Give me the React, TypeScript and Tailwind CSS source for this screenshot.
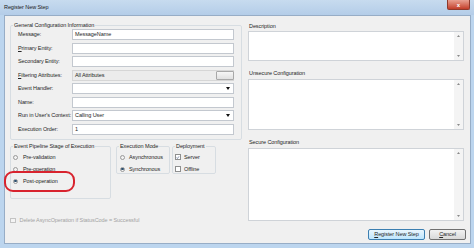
import React from "react";

const font = { fontFamily: '"Liberation Sans", Arial, sans-serif' };

function Field({ children, gray }: { children?: React.ReactNode; gray?: boolean }) {
  return (
    <div
      className={
        "w-[162px] h-[11px] border flex items-center pl-[2px] " +
        (gray ? "bg-[#ececec] border-[#d6d6d6]" : "bg-white border-[#c3c8cf]")
      }
    >
      {children}
    </div>
  );
}

function Arrow() {
  return (
    <svg width="4" height="3" viewBox="0 0 4 3" className="ml-auto mr-[3px]">
      <path d="M0 0h4L2 3z" fill="#111" />
    </svg>
  );
}

function Row({ label, children }: { label: React.ReactNode; children: React.ReactNode }) {
  return (
    <div className="flex items-center h-[11px]">
      <div className="w-[59px] pl-[5px] whitespace-nowrap">{label}</div>
      {children}
    </div>
  );
}

function Radio({ checked }: { checked?: boolean }) {
  return (
    <div className="w-[5px] h-[5px] rounded-full border border-[#9a9a9a] bg-gradient-to-br from-[#e6e6e6] to-[#ffffff] flex items-center justify-center">
      {checked && <div className="w-[2.5px] h-[2.5px] rounded-full bg-[#2e4f6e]" />}
    </div>
  );
}

function Check({ checked, disabled }: { checked?: boolean; disabled?: boolean }) {
  return (
    <div
      className={
        "w-[5.5px] h-[5.5px] border flex items-center justify-center " +
        (disabled ? "border-[#c4c4c4] bg-[#f4f4f4]" : "border-[#8e8f8f] bg-white")
      }
    >
      {checked && (
        <svg width="5" height="5" viewBox="0 0 5 5">
          <path d="M0.8 2.6 L2 3.9 L4.3 0.9" stroke="#3b4f7a" strokeWidth="0.9" fill="none" />
        </svg>
      )}
    </div>
  );
}

function TextArea({ h }: { h: string }) {
  return (
    <div className={"w-[216px] flex border border-[#cfd3d8] " + h}>
      <div className="flex-1 bg-white" />
      <div className="w-[9px] bg-[#f4f4f4] flex flex-col items-center justify-between py-[3px]">
        <svg width="3" height="2" viewBox="0 0 3 2">
          <path d="M0 2h3L1.5 0z" fill="#8a8a8a" />
        </svg>
        <svg width="3" height="2" viewBox="0 0 3 2">
          <path d="M0 0h3L1.5 2z" fill="#8a8a8a" />
        </svg>
      </div>
    </div>
  );
}

export default function App() {
  return (
    <div
      className="w-[474px] h-[248px] bg-[#bcd5ee] flex flex-col text-[5.5px] leading-[7px] tracking-[-0.08px] text-[#262626] overflow-hidden"
      style={font}
    >
      {/* title bar */}
      <div className="h-[15px] flex items-start bg-gradient-to-b from-[#c7dbef] to-[#b4cde8]">
        <div className="pl-[4px] pt-[3.5px] text-[#1a1a1a]">Register New Step</div>
        <div className="ml-auto mr-[4px] w-[23px] h-[10px] rounded-b-[2px] border border-[#8e3a2c] border-t-0 bg-gradient-to-b from-[#e8a091] to-[#c23c28] flex items-center justify-center text-white text-[6px] font-bold leading-none">
          x
        </div>
      </div>

      {/* client area */}
      <div className="ml-[4px] w-[467px] h-[229px] border border-[#97adc6] bg-[#f0f0f0] flex">
        {/* left column */}
        <div className="w-[238px] flex flex-col">
          <fieldset className="ml-[5px] mt-[6px] w-[232px] h-[118px] border border-[#d7dde2] rounded-[2px] px-[2px]">
            <legend className="px-[1px] leading-[7px]">General Configuration Information</legend>
            <div className="flex flex-col gap-[2.5px]">
              <Row label="Message:">
                <Field>MessageName</Field>
              </Row>
              <Row label={<><u>P</u>rimary Entity:</>}>
                <Field />
              </Row>
              <Row label="Secondary Entity:">
                <Field />
              </Row>
              <Row label={<><u>F</u>iltering Attributes:</>}>
                <Field gray>
                  All Attributes
                  <div className="ml-auto mr-[-1px] w-[18px] h-[9px] border border-[#a8a8a8] rounded-[1px] bg-gradient-to-b from-[#f6f6f6] to-[#e0e0e0]" />
                </Field>
              </Row>
              <Row label="Event Handler:">
                <Field>
                  <Arrow />
                </Field>
              </Row>
              <Row label="Name:">
                <Field />
              </Row>
              <Row label="Run in User's Context:">
                <Field>
                  Calling User
                  <Arrow />
                </Field>
              </Row>
              <Row label="Execution Order:">
                <Field>1</Field>
              </Row>
            </div>
          </fieldset>

          <div className="flex mt-[3px]">
            <fieldset className="relative ml-[5px] w-[101px] h-[56px] border border-[#d7dde2] rounded-[2px] px-[2px]">
              <legend className="px-[1px] leading-[7px]">Event Pipeline Stage of Execution</legend>
              <div className="flex flex-col mt-[1px]">
                <div className="flex items-center h-[12px] gap-[5px]">
                  <Radio />
                  <span>Pre-validation</span>
                </div>
                <div className="flex items-center h-[12px] gap-[5px]">
                  <Radio />
                  <span>Pre-operation</span>
                </div>
                <div className="flex items-center h-[12px] gap-[5px]">
                  <Radio checked />
                  <span>Post-operation</span>
                </div>
              </div>
              {/* red annotation */}
              <div className="absolute left-[-7px] top-[21px] w-[71px] h-[21px] border-2 border-[#d8232e] rounded-[9px]" />
            </fieldset>

            <fieldset className="ml-[5px] w-[54px] h-[31px] border border-[#d7dde2] rounded-[2px] px-[2px]">
              <legend className="px-[1px] leading-[7px]">Execution Mode</legend>
              <div className="flex flex-col mt-[1px] pl-[1px]">
                <div className="flex items-center h-[12px] gap-[4px]">
                  <Radio />
                  <span>Asynchronous</span>
                </div>
                <div className="flex items-center h-[12px] gap-[4px]">
                  <Radio checked />
                  <span>Synchronous</span>
                </div>
              </div>
            </fieldset>

            <fieldset className="ml-[2px] w-[44px] h-[31px] border border-[#d7dde2] rounded-[2px] px-[2px]">
              <legend className="px-[1px] leading-[7px]">Deployment</legend>
              <div className="flex flex-col mt-[1px]">
                <div className="flex items-center h-[12px] gap-[3.5px]">
                  <Check checked />
                  <span>Server</span>
                </div>
                <div className="flex items-center h-[12px] gap-[3.5px]">
                  <Check />
                  <span>Offline</span>
                </div>
              </div>
            </fieldset>
          </div>

          <div className="flex items-center ml-[5px] mt-[18px] h-[7px] gap-[4px] text-[#a3a3a3]">
            <Check disabled />
            <span>Delete AsyncOperation if StatusCode = Successful</span>
          </div>
        </div>

        {/* right column */}
        <div className="flex-1 flex flex-col pl-[5px] pt-[6.5px]">
          <div className="pl-[1px] h-[7px]">Description</div>
          <div className="mt-[1.5px]">
            <TextArea h="h-[30px]" />
          </div>
          <div className="pl-[1px] h-[7px] mt-[8.5px]">Unsecure Configuration</div>
          <div className="mt-[2.5px]">
            <TextArea h="h-[51px]" />
          </div>
          <div className="pl-[1px] h-[7px] mt-[8.5px]">Secure Configuration</div>
          <div className="mt-[2.5px]">
            <TextArea h="h-[73px]" />
          </div>
          <div className="w-[218px] flex justify-end gap-[4px] mt-[8px]">
            <button className="w-[57px] h-[11px] border border-[#3c7fb1] rounded-[2px] bg-gradient-to-b from-[#eaf6fd] to-[#bee6fd] leading-none text-[5.5px]" style={font}>
              <u>R</u>egister New Step
            </button>
            <button className="w-[37px] h-[11px] border border-[#707070] rounded-[2px] bg-gradient-to-b from-[#f2f2f2] to-[#d9d9d9] leading-none text-[5.5px]" style={font}>
              <u>C</u>ancel
            </button>
          </div>
        </div>
      </div>
    </div>
  );
}
